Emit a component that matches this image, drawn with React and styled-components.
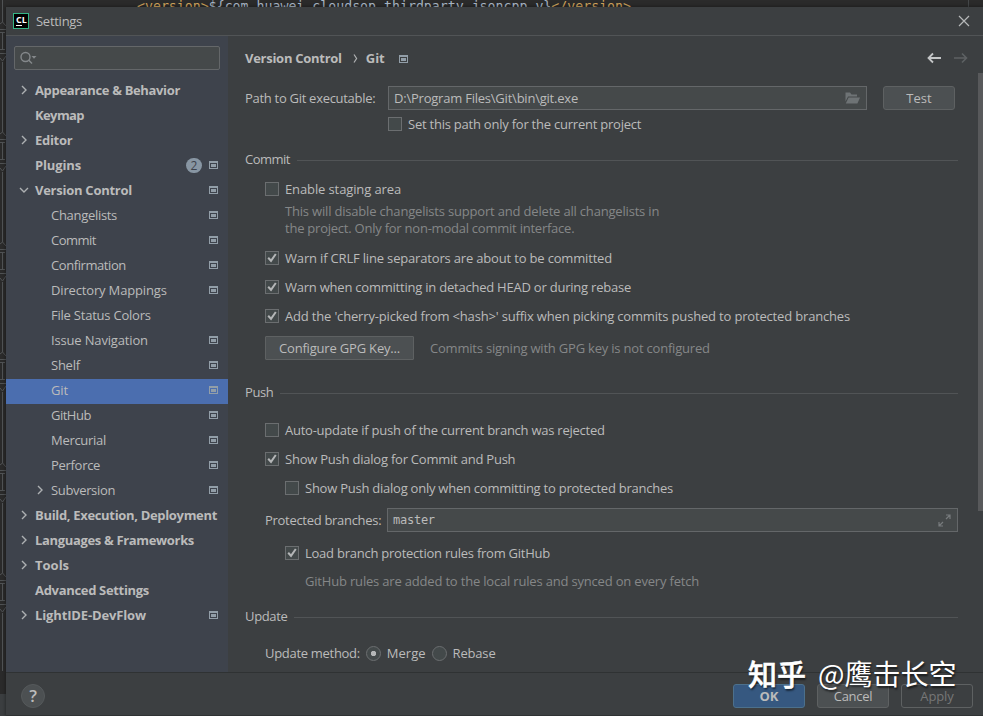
import React from 'react'
import styled, { createGlobalStyle, css } from 'styled-components'

const tree = [
  { text: 'Appearance & Behavior', ls: -0.345, arrow: 'right', bold: true },
  { text: 'Keymap', ls: -0.6, bold: true },
  { text: 'Editor', ls: -0.3, arrow: 'right', bold: true },
  { text: 'Plugins', ls: -0.14, bold: true, badge: 2, project: true },
  { text: 'Version Control', ls: -0.26, arrow: 'down', bold: true, project: true },
  { text: 'Changelists', ls: -0.3, level: 1, project: true },
  { text: 'Commit', ls: -0.5, level: 1, project: true },
  { text: 'Confirmation', ls: -0.42, level: 1, project: true },
  { text: 'Directory Mappings', ls: -0.16, level: 1, project: true },
  { text: 'File Status Colors', ls: -0.22, level: 1 },
  { text: 'Issue Navigation', ls: -0.16, level: 1, project: true },
  { text: 'Shelf', ls: -0.25, level: 1, project: true },
  { text: 'Git', ls: -0.12, level: 1, project: true, selected: true },
  { text: 'GitHub', ls: -0.5, level: 1, project: true },
  { text: 'Mercurial', ls: -0.3, level: 1, project: true },
  { text: 'Perforce', ls: -0.3, level: 1, project: true },
  { text: 'Subversion', ls: -0.34, level: 1, arrow: 'right', project: true },
  { text: 'Build, Execution, Deployment', ls: -0.325, arrow: 'right', bold: true },
  { text: 'Languages & Frameworks', ls: -0.337, arrow: 'right', bold: true },
  { text: 'Tools', ls: 0, arrow: 'right', bold: true },
  { text: 'Advanced Settings', ls: -0.318, bold: true },
  { text: 'LightIDE-DevFlow', ls: -0.138, arrow: 'right', bold: true, project: true },
]

const foldMarks = [22, 132, 242, 352, 463, 573]

const ProjectIcon = () => (
  <svg width='9' height='8' viewBox='0 0 9 8' fill='#929ea8' shapeRendering='crispEdges'>
    <path d='M0 0H9V8H0ZM1 2V7H8V2Z' fillRule='evenodd' />
    <rect x='2' y='3' width='5' height='3' />
  </svg>
)

const Chevron = ({ down }) => (
  <svg width='10' height='10' viewBox='0 0 10 10' fill='none' stroke='#adb0b2' strokeWidth='1.4'>
    <path d={down ? 'M1 3L5 7L9 3' : 'M3 1L7 5L3 9'} />
  </svg>
)

const Gutter = () => (
  <GutterSvg width='6' height='694' viewBox='0 0 6 694' fill='none' stroke='#505355'>
    {[-20, ...foldMarks].map((y, i) => (
      <path key={y} d={`M2.5 ${i === 0 ? 0 : y + 40}V${foldMarks[i] || 671}`} />
    ))}
    {foldMarks.map(y => (
      <path key={y} d={`M0 ${y + 2}L2.5 ${y}L6 ${y + 4}M0 ${y + 7.5}H6M0 ${y + 10.5}H5M2.5 ${y + 11}V${y + 27}M0 ${y + 27.5}H5M0 ${y + 31.5}H6M0 ${y + 36}L2.5 ${y + 39}L6 ${y + 34}`} />
    ))}
  </GutterSvg>
)

const CheckBox = ({ checked, label, ls, ...rest }) => (
  <CheckRow {...rest}>
    <Square>
      {checked && (
        <svg width='14' height='14' viewBox='0 0 14 14' fill='none' stroke='#b4b6b7' strokeWidth='2'>
          <path d='M3.2 6.8L6 9.8L10.8 3' />
        </svg>
      )}
    </Square>
    <Text $ls={ls}>{label}</Text>
  </CheckRow>
)

const Section = ({ title, ls, ...rest }) => (
  <SectionHead {...rest}>
    <Text $ls={ls}>{title}</Text>
    <Rule />
  </SectionHead>
)

const App = () => {
  return (
    <>
      <GlobalStyle />
      <Editor>
        <Gutter />
        <CodeLine>
          <i>&lt;version&gt;</i>{'${com.huawei.cloudsop.thirdparty.jsoncpp.v}'}<i>&lt;/version&gt;</i>
        </CodeLine>
        <Dialog>
          <TitleBar>
            <Logo>
              <b>CL</b>
              <u />
            </Logo>
            <Text $ls={-0.27}>Settings</Text>
            <svg width='12' height='12' viewBox='0 0 12 12' fill='none' stroke='#b6b8b9' strokeWidth='1.2'>
              <path d='M1 1L11 11M11 1L1 11' />
            </svg>
          </TitleBar>

          <Body>
            <Sidebar>
              <Search>
                <svg width='17' height='14' viewBox='0 0 17 14' fill='none' stroke='#84888b' strokeWidth='1.4'>
                  <circle cx='5.5' cy='6' r='4.5' />
                  <path d='M8.8 9.2L12 12.6' />
                  <path d='M11.5 5H16.5L14 7.8Z' fill='#84888b' stroke='none' />
                </svg>
              </Search>
              {tree.map(item => (
                <TreeRow key={item.text} $level={item.level || 0} $selected={item.selected} $bold={item.bold}>
                  <ArrowSlot>{item.arrow && <Chevron down={item.arrow === 'down'} />}</ArrowSlot>
                  <Text $ls={item.ls}>{item.text}</Text>
                  <RowEnd>
                    {item.badge && <Badge>{item.badge}</Badge>}
                    {item.project && <ProjectIcon />}
                  </RowEnd>
                </TreeRow>
              ))}
            </Sidebar>

            <Main>
              <Breadcrumb>
                <Text $ls={-0.27}>Version Control</Text>
                <svg width='5' height='9' viewBox='0 0 5 9' fill='none' stroke='#b0b2b3' strokeWidth='1.2'>
                  <path d='M1 0.5L3.6 4.5L1 8.5' />
                </svg>
                <Text $ls={-0.1}>Git</Text>
                <ProjectIcon />
                <NavArrows>
                  <svg width='14' height='12' viewBox='0 0 14 12' fill='none' stroke='#c4c6c7' strokeWidth='1.8'>
                    <path d='M14 6H2M6 1.5L1.5 6L6 10.5' />
                  </svg>
                  <svg width='14' height='12' viewBox='0 0 14 12' fill='none' stroke='#5e6163' strokeWidth='1.6'>
                    <path d='M0 6H12M8 1.5L12.5 6L8 10.5' />
                  </svg>
                </NavArrows>
              </Breadcrumb>

              <PathRow>
                <Text $ls={-0.29}>Path to Git executable:</Text>
                <Field $width={479}>
                  <Text $ls={-0.22}>D:\Program Files\Git\bin\git.exe</Text>
                  <svg width='15' height='12' viewBox='0 0 15 12' fill='#6e7375'>
                    <path d='M0.5 0.5H5L6.5 2.5H12V4.5H3L0.5 9.5Z' />
                    <path d='M3.6 5.5H15L12.4 11.5H0.8Z' />
                  </svg>
                </Field>
                <Button $width={72}>
                  <Text>Test</Text>
                </Button>
              </PathRow>
              <CheckBox label='Set this path only for the current project' ls={-0.23} $left={143} $top={7} />

              <Section title='Commit' ls={-0.5} $height={44} $top={7} />
              <CheckBox label='Enable staging area' ls={-0.115} $top={0} />
              <Hint $left={40} $top={7}>
                <Text $ls={-0.185}>This will disable changelists support and delete all changelists in</Text>
                <Text $ls={-0.235}>the project. Only for non-modal commit interface.</Text>
              </Hint>
              <CheckBox checked label='Warn if CRLF line separators are about to be committed' ls={-0.173} $top={14} />
              <CheckBox checked label='Warn when committing in detached HEAD or during rebase' ls={-0.224} />
              <CheckBox
                checked
                label="Add the 'cherry-picked from <hash>' suffix when picking commits pushed to protected branches"
                ls={-0.17}
              />
              <GpgRow>
                <Button $width={149} $square>
                  <Text $ls={-0.189}>Configure GPG Key...</Text>
                </Button>
                <Hint>
                  <Text $ls={-0.205}>Commits signing with GPG key is not configured</Text>
                </Hint>
              </GpgRow>

              <Section title='Push' ls={-0.4} $height={60} $top={3} />
              <CheckBox label='Auto-update if push of the current branch was rejected' ls={-0.245} $top={0} />
              <CheckBox checked label='Show Push dialog for Commit and Push' ls={-0.225} />
              <CheckBox label='Show Push dialog only when committing to protected branches' ls={-0.241} $left={40} />
              <BranchRow>
                <Text $ls={-0.3}>Protected branches:</Text>
                <Field $width={571} $mono>
                  <Text>master</Text>
                  <svg width='13' height='13' viewBox='0 0 13 13' fill='none' stroke='#777b7d' strokeWidth='1.2'>
                    <path d='M8 1H12V5M12 1L8 5M5 12H1V8M1 12L5 8' />
                  </svg>
                </Field>
              </BranchRow>
              <CheckBox checked label='Load branch protection rules from GitHub' ls={-0.244} $left={40} $top={14} />
              <Hint $left={60} $top={13}>
                <Text $ls={-0.185}>GitHub rules are added to the local rules and synced on every fetch</Text>
              </Hint>

              <Section title='Update' ls={-0.35} $height={54} $top={0} />
              <RadioRow>
                <Text $ls={-0.3}>Update method:</Text>
                <Radio $on />
                <Text $ls={0}>Merge</Text>
                <Radio />
                <Text $ls={-0.166}>Rebase</Text>
              </RadioRow>
              <ScrollThumb />
            </Main>
          </Body>

          <Footer>
            <Help>?</Help>
            <Button $width={72} $primary>
              <Text>OK</Text>
            </Button>
            <Button $width={72}>
              <Text $ls={-0.3}>Cancel</Text>
            </Button>
            <Button $width={72} $disabled>
              <Text $ls={-0.1}>Apply</Text>
            </Button>
          </Footer>
        </Dialog>
        <Watermark>
          <b>知乎</b>
          <span>@鹰击长空</span>
        </Watermark>
      </Editor>
    </>
  )
}

const GlobalStyle = createGlobalStyle`
  * {
    box-sizing: border-box;
  }
  body {
    margin: 0;
    background: #2b2b2b;
    overflow: hidden;
  }
  svg {
    display: block;
    flex: none;
  }
`

const Editor = styled.div`
  position: relative;
  width: 983px;
  height: 716px;
  padding: 7px 0 0 6px;
  overflow: hidden;
  background: linear-gradient(#3c3f41, #3c3f41) 0 694px / 6px 22px no-repeat,
    linear-gradient(#45484a, #45484a) 968px 0 / 1px 7px no-repeat, #2b2b2b;
  color: #bbbbbb;
  font: 13px/18px 'Open Sans', 'Noto Sans', sans-serif;
`

const GutterSvg = styled.svg`
  position: absolute;
  left: 0;
  top: 0;
`

const CodeLine = styled.div`
  position: absolute;
  left: 137px;
  top: -2px;
  color: #a9b7c6;
  font: 13.24px/18px 'DejaVu Sans Mono', monospace;
  white-space: pre;
  i {
    color: #d0a35c;
    font-style: normal;
  }
`

const Dialog = styled.div`
  position: relative;
  display: flex;
  flex-direction: column;
  height: 709px;
  background: #3c3f41;
  box-shadow: 0 0 4px rgba(0, 0, 0, 0.5);
`

const Text = styled.span`
  letter-spacing: ${p => p.$ls || 0}px;
  white-space: nowrap;
`

const TitleBar = styled.div`
  display: flex;
  align-items: center;
  height: 29px;
  padding: 0 13px 0 7px;
  border-bottom: 1px solid #515456;
  ${Text} {
    margin-left: 7px;
  }
  svg {
    margin-left: auto;
  }
`

const Logo = styled.div`
  display: flex;
  flex-direction: column;
  width: 16px;
  height: 16px;
  padding: 1px 2px;
  background: #000;
  border: 1px solid #35b585;
  b {
    color: #fff;
    font: 700 9px/9px 'Open Sans', sans-serif;
  }
  u {
    width: 6px;
    height: 1px;
    margin-top: 1px;
    background: #fff;
  }
`

const Body = styled.div`
  display: flex;
  height: 636px;
`

const Sidebar = styled.div`
  width: 222px;
  background: #3e434c;
`

const Search = styled.div`
  display: flex;
  align-items: center;
  width: 206px;
  height: 24px;
  margin: 10px 8px 9px;
  padding-left: 5px;
  background: #45494a;
  border: 1px solid #646769;
  border-radius: 2px;
`

const TreeRow = styled.div`
  display: flex;
  align-items: center;
  height: 25px;
  padding: 0 10px 3px ${p => 13 + p.$level * 16}px;
  background: ${p => (p.$selected ? '#4b6eaf' : 'transparent')};
  font-weight: ${p => (p.$bold ? 700 : 400)};
`

const ArrowSlot = styled.span`
  width: 16px;
`

const RowEnd = styled.div`
  display: flex;
  align-items: center;
  gap: 7px;
  margin-left: auto;
`

const Badge = styled.span`
  width: 16px;
  height: 15px;
  border-radius: 8px;
  background: #8896a3;
  color: #3e434c;
  font-size: 12px;
  font-weight: 400;
  line-height: 15px;
  text-align: center;
`

const Main = styled.div`
  position: relative;
  flex: 1;
  padding: 0 25px 0 17px;
`

const Breadcrumb = styled.div`
  display: flex;
  align-items: center;
  height: 44px;
  font-weight: 700;
  svg {
    margin: 0 8px 0 11px;
  }
  ${Text} + svg + ${Text} + svg {
    margin: 1px 0 0 14px;
  }
`

const NavArrows = styled.div`
  display: flex;
  gap: 13px;
  margin: 0 -10px 0 auto;
  && svg {
    margin: 0;
  }
`

const PathRow = styled.div`
  display: flex;
  align-items: center;
  justify-content: space-between;
  height: 24px;
  margin: 6px 3px 0 0;
  > ${Text} {
    width: 143px;
    padding-bottom: 1px;
  }
  > div:nth-child(2) {
    margin-right: 16px;
  }
`

const Field = styled.div`
  display: flex;
  align-items: center;
  justify-content: space-between;
  flex: none;
  width: ${p => p.$width}px;
  height: 24px;
  padding: 0 6px 0 5px;
  background: #45494a;
  border: 1px solid #646769;
  ${Text} {
    padding-bottom: 1px;
  }
  ${p =>
    p.$mono &&
    css`
      font-family: 'DejaVu Sans Mono', monospace;
      font-size: 12px;
      ${Text} {
        letter-spacing: -0.25px;
      }
    `}
`

const Button = styled.div`
  display: flex;
  align-items: center;
  justify-content: center;
  flex: none;
  width: ${p => p.$width}px;
  height: 24px;
  border: 1px solid #5e6162;
  border-radius: ${p => (p.$square ? 1 : 3)}px;
  background: #4c5052;
  ${p =>
    p.$primary &&
    css`
      background: #365880;
      border-color: #4c708c;
      font-weight: 700;
    `}
  ${p =>
    p.$disabled &&
    css`
      background: transparent;
      color: #777777;
    `}
`

const CheckRow = styled.div`
  display: flex;
  align-items: center;
  height: 14px;
  margin: ${p => p.$top ?? 15}px 0 0 ${p => p.$left ?? 20}px;
`

const Square = styled.span`
  display: flex;
  align-items: center;
  justify-content: center;
  width: 14px;
  height: 14px;
  margin-right: 6px;
  background: #43494a;
  border: 1px solid #6b6e70;
`

const SectionHead = styled.div`
  display: flex;
  align-items: center;
  height: ${p => p.$height}px;
  margin-top: ${p => p.$top}px;
  ${Text} {
    padding-bottom: 2px;
  }
`

const Rule = styled.span`
  flex: 1;
  height: 1px;
  margin: 1px 0 0 7px;
  background: #515456;
`

const Hint = styled.div`
  display: flex;
  flex-direction: column;
  margin: ${p => p.$top || 0}px 0 0 ${p => p.$left || 0}px;
  color: #858788;
  line-height: 17px;
`

const GpgRow = styled.div`
  display: flex;
  align-items: center;
  gap: 16px;
  margin: 13px 0 0 20px;
`

const BranchRow = styled.div`
  display: flex;
  align-items: center;
  justify-content: space-between;
  margin: 13px 0 0 20px;
  > ${Text} {
    padding-bottom: 1px;
  }
`

const RadioRow = styled.div`
  display: flex;
  align-items: center;
  height: 19px;
  margin-left: 20px;
  ${Text} {
    padding-bottom: 1px;
  }
`

const Radio = styled.span`
  width: 15px;
  height: 15px;
  margin: 0 6px;
  border: 1px solid #6b6e70;
  border-radius: 50%;
  background: ${p => (p.$on ? 'radial-gradient(circle, #b4b6b7 2.4px, #43494a 3px)' : '#43494a')};
`

const ScrollThumb = styled.div`
  position: absolute;
  right: 0;
  top: 37px;
  width: 5px;
  height: 438px;
  background: #58595b;
`

const Footer = styled.div`
  display: flex;
  align-items: center;
  gap: 12px;
  height: 44px;
  padding: 4px 10px 0 15px;
  border-top: 1px solid #2f3233;
  border-bottom: 1px solid #2f3233;
`

const Help = styled.div`
  width: 24px;
  height: 24px;
  margin-right: auto;
  border: 1px solid #55595b;
  border-radius: 50%;
  background: #4c5052;
  font-size: 17px;
  font-weight: 600;
  line-height: 22px;
  text-align: center;
`

const Watermark = styled.div`
  position: absolute;
  left: 748px;
  top: 652px;
  display: flex;
  align-items: center;
  color: #fff;
  font: 28px/42px 'Noto Sans CJK SC', sans-serif;
  text-shadow: 1px 2px 2px rgba(0, 0, 0, 0.6);
  white-space: nowrap;
  b {
    width: 70px;
    font-size: 29px;
    font-weight: 500;
    -webkit-text-stroke: 0.5px #fff;
  }
`

export default App
